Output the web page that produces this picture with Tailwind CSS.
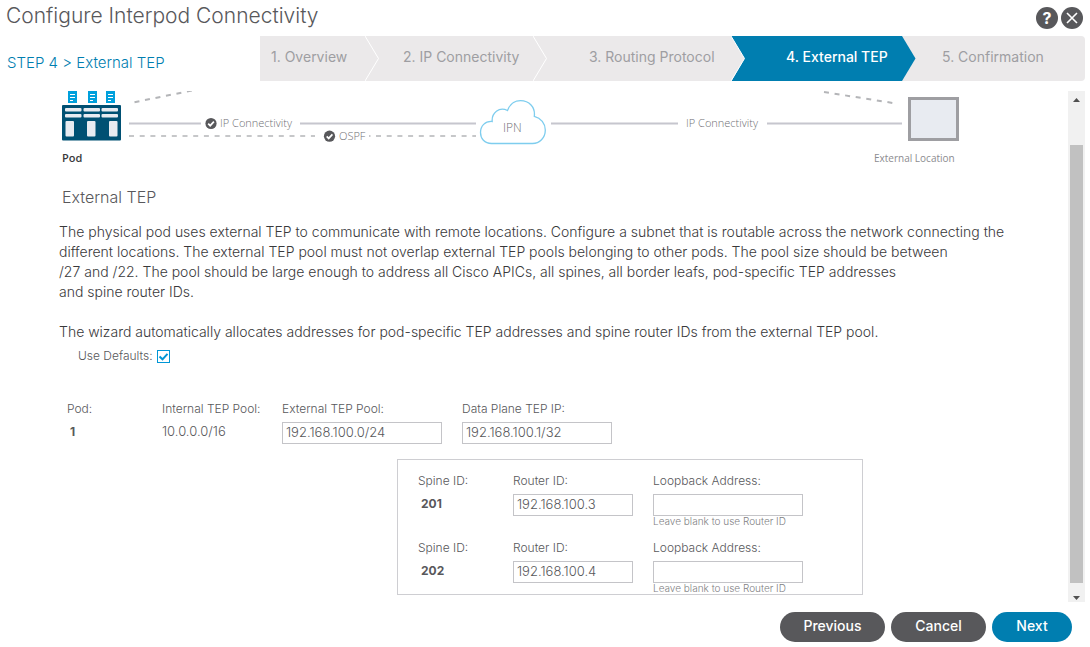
<!DOCTYPE html>
<html lang="en">
<head>
    <meta charset="UTF-8">
    <meta name="viewport" content="width=device-width, initial-scale=1.0">
    <title>Configure Interpod Connectivity</title>
    <script src="https://cdn.jsdelivr.net/npm/@tailwindcss/browser@4"></script>
</head>
<body class="bg-white font-['Inter',sans-serif] text-[#58585b]">
    <div class="min-h-screen flex flex-col">
        <!-- Title bar -->
        <header class="flex items-start justify-between h-9 pl-1.5 pr-[7px]">
            <h1 class="text-[21px] leading-8 font-light">Configure Interpod Connectivity</h1>
            <div class="flex gap-[3px] pt-[7px]">
                <button type="button" aria-label="Help" class="size-[22px] rounded-full bg-[#58585b] text-white text-base leading-[22px] font-bold">?</button>
                <button type="button" aria-label="Close" class="size-[22px] rounded-full bg-[#58585b] text-white">
                    <svg class="size-[22px]" viewBox="0 0 22 22" fill="none" stroke="currentColor" stroke-width="1.6"><path d="M6 6l10 10M16 6L6 16"/></svg>
                </button>
            </div>
        </header>

        <!-- Wizard steps -->
        <div class="flex pl-[7px] pr-[5px]">
            <p class="w-[253px] shrink-0 pt-4 text-[15px] leading-[22px] font-[350] text-[#007eb0]">STEP 4 &gt; External TEP</p>
            <ol class="flex flex-1 h-[45px] rounded-r-sm bg-[#ebe9ea] text-[14px] leading-[42px] text-[#9e9ea2] whitespace-nowrap">
                <li class="flex">
                    <span class="w-[105px] pl-[11px]">1. Overview</span>
                    <svg class="w-3.5 h-[45px]" viewBox="0 0 14 45" fill="none" stroke="white"><path d="M0 0L13.5 22.5L0 45"/></svg>
                </li>
                <li class="flex">
                    <span class="w-[154px] pl-6">2. IP Connectivity</span>
                    <svg class="w-3.5 h-[45px]" viewBox="0 0 14 45" fill="none" stroke="white"><path d="M0 0L13.5 22.5L0 45"/></svg>
                </li>
                <li class="w-[184px] pl-[42px]">3. Routing Protocol</li>
                <li class="flex text-white font-medium" aria-current="step">
                    <svg class="w-3.5 h-[45px]" viewBox="0 0 14 45"><path fill="#007eb0" d="M0 0H14V45H0.5L13.5 22.5Z"/><path d="M0 0L13.5 22.5L0 45" fill="none" stroke="white"/></svg>
                    <span class="w-[157px] pl-[41px] bg-[#007eb0]">4. External TEP</span>
                    <svg class="w-3.5 h-[45px]" viewBox="0 0 14 45"><path fill="#007eb0" d="M0 0L13.5 22.5L0 45Z"/></svg>
                </li>
                <li class="pl-[26px]">5. Confirmation</li>
            </ol>
        </div>

        <main class="flex flex-1 mt-2.5 pr-[5px]">
            <div class="flex-1 pl-[59px] pb-[7px]">
                <!-- Topology -->
                <svg class="w-[901px] h-20 font-['Open_Sans',sans-serif] text-[11px] font-light" viewBox="59 91 901 80" fill="none">
                    <path fill="#00a0dc" d="M68 91h9v12h-9zM88 91h9v12h-9zM106 91h9v12h-9z"/>
                    <path stroke="white" d="M70 94.5h5M70 97.5h5M70 100.5h3M90 94.5h5M90 97.5h5M90 100.5h3M108 94.5h5M108 97.5h5M108 100.5h3"/>
                    <rect x="62" y="105" width="59" height="35.5" rx="1" fill="#005073"/>
                    <g fill="#e8ebf1">
                        <rect x="65" y="108" width="16.5" height="3.5" rx="1"/>
                        <rect x="83.5" y="108" width="16.5" height="3.5" rx="1"/>
                        <rect x="101.5" y="108" width="16.5" height="3.5" rx="1"/>
                        <rect x="65" y="114" width="16.5" height="3.5" rx="1"/>
                        <rect x="83.5" y="114" width="16.5" height="3.5" rx="1"/>
                        <rect x="101.5" y="114" width="16.5" height="3.5" rx="1"/>
                        <rect x="65.5" y="121" width="8.5" height="15.5" rx="1"/>
                        <rect x="87" y="121" width="8.5" height="15.5" rx="1"/>
                        <rect x="109" y="121" width="8.5" height="15.5" rx="1"/>
                    </g>
                    <path stroke="#c6c6ce" stroke-width="2" d="M129 123.5H201M300 123.5H476M551 123.5H678M767 123.5H902"/>
                    <g stroke="#b4b5b8" stroke-width="2" stroke-dasharray="5 5.7">
                        <path d="M134.5 102.2L192 90.5"/>
                        <path d="M129 136H315" stroke-width="1.6"/>
                        <path d="M376 136H476" stroke-width="1.6"/>
                        <path d="M824 92L893 103"/>
                    </g>
                    <path d="M369 136h1.5" stroke="#b4b5b8" stroke-width="1.6"/>
                    <g fill="#58585b">
                        <circle cx="211" cy="123.5" r="5.6"/>
                        <circle cx="329.5" cy="136.2" r="5.6"/>
                    </g>
                    <path stroke="white" stroke-width="1.7" d="M208.2 123.7l2 2 3.7-4M326.7 136.4l2 2 3.7-4"/>
                    <path stroke="#7ecdee" stroke-width="1.3" d="M491.5 143.5C484.5 143.5 480.5 138.5 480.5 132.5C480.5 126 485 121 492.2 121.5C491.5 113 499 106.5 507.5 110.5C510 104 515 100.7 520.5 100.7C529 100.7 535.5 107 534.3 116.3C541 118 545.3 123.5 545.3 130C545.3 138 539.5 143.5 532.5 143.5Z"/>
                    <rect x="909.5" y="98.5" width="48" height="41" fill="#e8ebf1" stroke="#9e9ea2" stroke-width="3"/>
                    <g fill="#707075">
                        <text x="220" y="127">IP Connectivity</text>
                        <text x="339" y="140">OSPF</text>
                        <text x="686" y="127">IP Connectivity</text>
                        <text x="874" y="162" fill="#8c8c90" class="text-[10px] font-normal">External Location</text>
                        <text x="503" y="132" class="text-[12px]">IPN</text>
                    </g>
                    <text x="62" y="162" fill="#39393b" class="font-semibold">Pod</text>
                </svg>

                <h2 class="mt-4 pl-[3px] text-base leading-5 font-light">External TEP</h2>
                <p class="mt-[15px] text-[14px] leading-5 font-light text-[#39393b] whitespace-nowrap">
                    The physical pod uses external TEP to communicate with remote locations. Configure a subnet that is routable across the network connecting the<br>
                    different locations. The external TEP pool must not overlap external TEP pools belonging to other pods. The pool size should be between<br>
                    /27 and /22. The pool should be large enough to address all Cisco APICs, all spines, all border leafs, pod-specific TEP addresses<br>
                    and spine router IDs.
                </p>
                <p class="mt-5 text-[14px] leading-5 font-light text-[#39393b]">The wizard automatically allocates addresses for pod-specific TEP addresses and spine router IDs from the external TEP pool.</p>

                <div class="flex items-center gap-1 mt-1 pl-[19px] text-xs leading-5 font-[350]">
                    <label for="defaults">Use Defaults:</label>
                    <span class="relative size-[13px]">
                        <input type="checkbox" id="defaults" checked class="block size-[13px] appearance-none border border-[#0096d6] bg-white">
                        <svg class="absolute inset-0 size-[13px] pointer-events-none" viewBox="0 0 13 13" fill="none" stroke="#0096d6" stroke-width="2"><path d="M2.5 6.5l3 2.8 5-5.5"/></svg>
                    </span>
                </div>

                <!-- Pod row -->
                <div class="grid grid-cols-[95px_120px_160px_150px] mt-[33px] pl-2 text-xs leading-5 font-[350] whitespace-nowrap">
                    <div>
                        <p>Pod:</p>
                        <p class="mt-[3px] pl-[3px] font-bold">1</p>
                    </div>
                    <div>
                        <p>Internal TEP Pool:</p>
                        <p class="mt-0.5 text-[13px] font-light">10.0.0.0/16</p>
                    </div>
                    <div>
                        <label for="extPool" class="block">External TEP Pool:</label>
                        <input type="text" id="extPool" value="192.168.100.0/24" class="block mt-[3px] w-full h-[22px] px-[3px] pb-0.5 border border-[#c4c4c8] text-[13px] font-light">
                    </div>
                    <div class="pl-5 w-[170px]">
                        <label for="dataTep" class="block">Data Plane TEP IP:</label>
                        <input type="text" id="dataTep" value="192.168.100.1/32" class="block mt-[3px] w-full h-[22px] px-[3px] pb-0.5 border border-[#c4c4c8] text-[13px] font-light">
                    </div>
                </div>

                <!-- Spines -->
                <div class="flex flex-col gap-3 w-[466px] mt-[15px] ml-[338px] pt-[11px] pb-px pl-5 border border-[#ceced2] text-xs leading-5 font-[350]">
                    <div class="grid grid-cols-[95px_120px_150px]">
                        <div>
                            <p>Spine ID:</p>
                            <p class="mt-[3px] pl-[3px] font-bold">201</p>
                        </div>
                        <div>
                            <label for="router1" class="block">Router ID:</label>
                            <input type="text" id="router1" value="192.168.100.3" class="block mt-[3px] w-full h-[22px] px-[3px] pb-0.5 border border-[#c4c4c8] text-[13px] font-light">
                        </div>
                        <div class="pl-5 w-[170px]">
                            <label for="loopback1" class="block">Loopback Address:</label>
                            <input type="text" id="loopback1" class="block mt-[3px] w-full h-[22px] px-[3px] border border-[#c4c4c8] text-[13px] font-light">
                            <p class="text-[10px] leading-[10px] text-[#7f7f84]">Leave blank to use Router ID</p>
                        </div>
                    </div>
                    <div class="grid grid-cols-[95px_120px_150px]">
                        <div>
                            <p>Spine ID:</p>
                            <p class="mt-[3px] pl-[3px] font-bold">202</p>
                        </div>
                        <div>
                            <label for="router2" class="block">Router ID:</label>
                            <input type="text" id="router2" value="192.168.100.4" class="block mt-[3px] w-full h-[22px] px-[3px] pb-0.5 border border-[#c4c4c8] text-[13px] font-light">
                        </div>
                        <div class="pl-5 w-[170px]">
                            <label for="loopback2" class="block">Loopback Address:</label>
                            <input type="text" id="loopback2" class="block mt-[3px] w-full h-[22px] px-[3px] border border-[#c4c4c8] text-[13px] font-light">
                            <p class="text-[10px] leading-[10px] text-[#7f7f84]">Leave blank to use Router ID</p>
                        </div>
                    </div>
                </div>
            </div>

            <!-- Scrollbar -->
            <div class="flex flex-col items-center w-[17px] pt-[7px] pb-0.5 bg-[#f1f1f1]">
                <svg class="w-[7px] h-1" viewBox="0 0 7 4" fill="#505050"><path d="M0 4L3.5 0L7 4Z"/></svg>
                <div class="flex-1 w-[13px] mt-[43px] mb-[13px] bg-[#c1c1c1]"></div>
                <svg class="w-[7px] h-1" viewBox="0 0 7 4" fill="#505050"><path d="M0 0H7L3.5 4Z"/></svg>
            </div>
        </main>

        <footer class="flex justify-end gap-1.5 pt-2.5 pb-[5px] pr-[18px] text-[14px] leading-[28px] font-medium text-white">
            <button type="button" class="w-[105px] h-[30px] pb-0.5 rounded-full bg-[#58585b]">Previous</button>
            <button type="button" class="w-[95px] h-[30px] pb-0.5 rounded-full bg-[#58585b]">Cancel</button>
            <button type="button" class="w-20 h-[30px] pb-0.5 rounded-full bg-[#007eb0]">Next</button>
        </footer>
    </div>
</body>
</html>
